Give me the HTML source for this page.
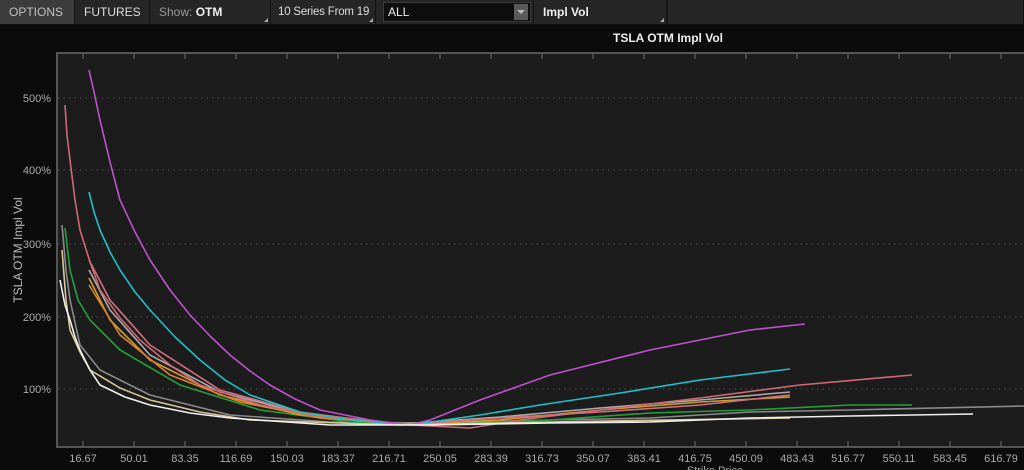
<!DOCTYPE html><html><head><meta charset="utf-8"><style>
body{margin:0;width:1024px;height:470px;background:#0b0b0b;overflow:hidden;font-family:"Liberation Sans",sans-serif;position:relative}
.tb{position:absolute;top:0;left:0;width:1024px;height:24px;background:#202020;border-bottom:1px solid #111}
.c{position:absolute;top:0;height:24px;line-height:24px;font-size:12px;color:#c8c8c8;box-sizing:border-box;border-right:1px solid #141414;padding-left:9px;white-space:nowrap;overflow:hidden}
.c b{color:#eee}
.corner{position:absolute;right:2px;bottom:2px;width:0;height:0;border-left:4px solid transparent;border-bottom:4px solid #aaa}
</style></head><body>
<div class="tb">
<div class="c" style="left:0;width:75px;background:#3c3c3c;color:#c0c0c0">OPTIONS</div>
<div class="c" style="left:75px;width:75px;background:#262626;color:#ddd">FUTURES</div>
<div class="c" style="left:150px;width:121px;background:#262626;color:#999">Show: <b>OTM</b><span class="corner"></span></div>
<div class="c" style="left:271px;width:105px;background:#262626;color:#ddd;padding-left:7px;font-size:11.5px;letter-spacing:-0.2px">10 Series From 19<span class="corner"></span></div>
<div class="c" style="left:376px;width:158px;background:#262626;padding:0">
<div style="position:absolute;left:7px;top:2px;width:148px;height:20px;background:#0e0e0e;border:1px solid #3a3a3a;box-sizing:border-box;line-height:18px;padding-left:4px;color:#eee">ALL<div style="position:absolute;right:2px;top:1px;width:14px;height:16px;background:#5a5a5a"><div style="position:absolute;left:3px;top:6px;border-left:4px solid transparent;border-right:4px solid transparent;border-top:4px solid #bbb"></div></div></div></div>
<div class="c" style="left:534px;width:133px;background:#262626"><b style="color:#eee">Impl Vol</b><span class="corner"></span></div>
<div class="c" style="left:667px;width:357px;background:#262626;border-left:1px solid #141414"></div>
</div>
<div style="position:absolute;left:613px;top:31px;font-size:12px;font-weight:bold;color:#eee;white-space:nowrap">TSLA OTM Impl Vol</div>
<div style="position:absolute;left:18px;top:250px;font-size:12px;color:#bbb;transform:translate(-50%,-50%) rotate(-90deg);white-space:nowrap">TSLA OTM Impl Vol</div>
<svg width="1024" height="470" style="position:absolute;left:0;top:0" font-family="Liberation Sans" font-size="11">
<rect x="57" y="53" width="970" height="394" fill="#1c1c1c" stroke="#555" stroke-width="2"/>
<g stroke="#555" stroke-width="1.5">
<g id="t"><line x1="83" y1="54" x2="83" y2="59"/><line x1="134" y1="54" x2="134" y2="59"/><line x1="185" y1="54" x2="185" y2="59"/><line x1="236" y1="54" x2="236" y2="59"/><line x1="287" y1="54" x2="287" y2="59"/><line x1="338" y1="54" x2="338" y2="59"/><line x1="389" y1="54" x2="389" y2="59"/><line x1="440" y1="54" x2="440" y2="59"/><line x1="491" y1="54" x2="491" y2="59"/><line x1="542" y1="54" x2="542" y2="59"/><line x1="593" y1="54" x2="593" y2="59"/><line x1="644" y1="54" x2="644" y2="59"/><line x1="695" y1="54" x2="695" y2="59"/><line x1="746" y1="54" x2="746" y2="59"/><line x1="797" y1="54" x2="797" y2="59"/><line x1="848" y1="54" x2="848" y2="59"/><line x1="899" y1="54" x2="899" y2="59"/><line x1="950" y1="54" x2="950" y2="59"/><line x1="1001" y1="54" x2="1001" y2="59"/></g>
<use href="#t" transform="translate(0,387)"/>
</g>
<g stroke="#555" stroke-dasharray="1.5 4">
<line x1="58" y1="98" x2="1024" y2="98"/><line x1="58" y1="170" x2="1024" y2="170"/><line x1="58" y1="244" x2="1024" y2="244"/><line x1="58" y1="317" x2="1024" y2="317"/><line x1="58" y1="389" x2="1024" y2="389"/></g>
<g fill="#aaa" text-anchor="end"><text x="51" y="102">500%</text><text x="51" y="174">400%</text><text x="51" y="248">300%</text><text x="51" y="321">200%</text><text x="51" y="393">100%</text></g>
<g fill="#aaa" text-anchor="middle"><text x="83" y="462">16.67</text><text x="134" y="462">50.01</text><text x="185" y="462">83.35</text><text x="236" y="462">116.69</text><text x="287" y="462">150.03</text><text x="338" y="462">183.37</text><text x="389" y="462">216.71</text><text x="440" y="462">250.05</text><text x="491" y="462">283.39</text><text x="542" y="462">316.73</text><text x="593" y="462">350.07</text><text x="644" y="462">383.41</text><text x="695" y="462">416.75</text><text x="746" y="462">450.09</text><text x="797" y="462">483.43</text><text x="848" y="462">516.77</text><text x="899" y="462">550.11</text><text x="950" y="462">583.45</text><text x="1001" y="462">616.79</text><text x="715" y="474">Strike Price</text></g>
<g fill="none" stroke-width="1.6" stroke-linejoin="round">
<polyline stroke="#8a8a8a" points="62,225 66,270 70,300 80,345 100,370 150,395 230,415 330,422 430,423 550,420 650,418 750,412 850,410 1024,406"/>
<polyline stroke="#22a03a" points="65,228 70,270 78,300 90,320 120,350 180,385 260,410 350,422 430,425 550,420 650,413 750,410 850,405 912,405"/>
<polyline stroke="#d4a020" points="89,278 110,320 150,360 220,395 300,415 400,425 500,420 600,410 700,402 790,397"/>
<polyline stroke="#aaaaaa" points="89,270 110,310 150,355 220,392 300,413 400,424 500,417 600,408 700,400 790,392"/>
<polyline stroke="#d06878" points="65,105 67,135 70,160 75,200 80,230 90,262 100,290 120,318 140,340 170,365 200,385 260,405 330,418 410,425 470,428 520,420 600,410 700,398 800,385 912,375"/>
<polyline stroke="#d07080" points="89,260 110,300 150,345 220,390 300,412 400,425 500,418 600,412 700,405 790,395"/>
<polyline stroke="#e08030" points="89,285 120,335 170,375 240,402 320,418 420,425"/>
<polyline stroke="#20c0c8" points="89,192 94,212 100,230 110,252 120,270 135,292 150,310 175,337 200,360 225,380 250,395 300,412 350,420 410,425 480,415 540,405 620,393 700,380 790,369"/>
<polyline stroke="#c050d0" points="89,70 94,92 100,120 110,162 120,200 135,232 150,260 170,290 190,315 210,336 230,355 250,371 270,385 295,399 320,410 370,420 410,425 430,420 480,400 550,375 650,350 750,330 805,324"/>
<polyline stroke="#d8c898" points="62,250 66,300 70,330 80,352 90,370 120,388 150,400 200,412 250,420 400,425 550,422 790,418"/>
<polyline stroke="#f0f0f0" points="60,280 65,305 70,320 75,337 80,350 90,370 100,385 125,397 150,405 190,413 230,418 330,425 430,425 550,423 650,422 750,418 850,416 973,414"/>
</g>
</svg>
</body></html>
